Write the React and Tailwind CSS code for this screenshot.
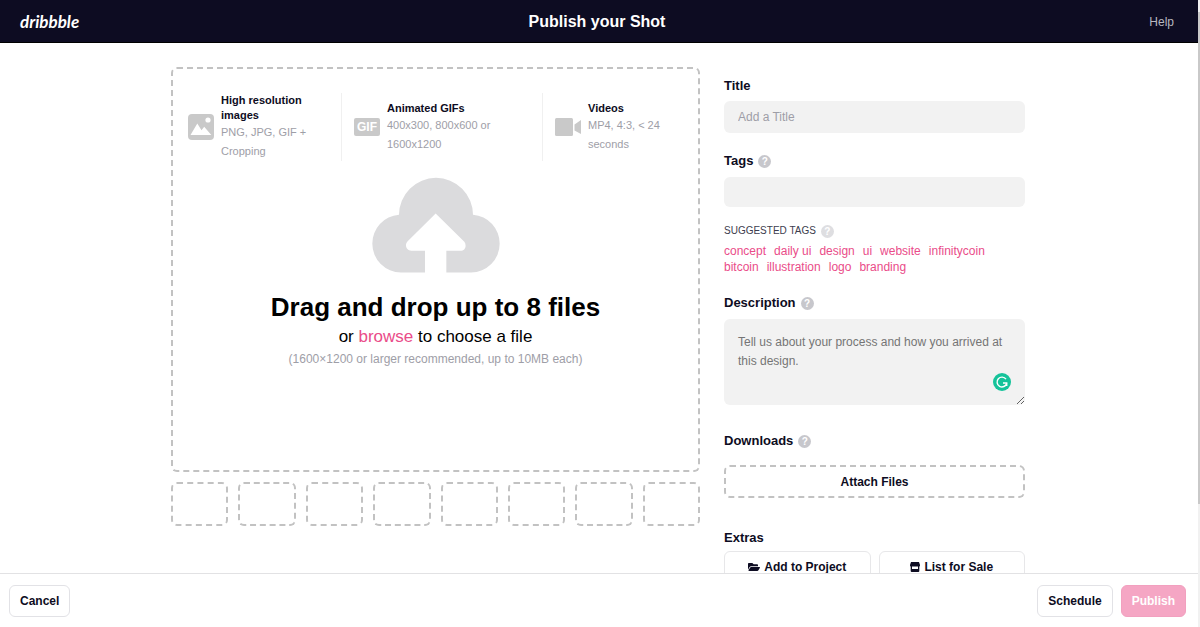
import { FaFolderOpen } from 'react-icons/fa';

const suggestedTags = [
  'concept', 'daily ui', 'design', 'ui', 'website',
  'infinitycoin', 'bitcoin', 'illustration', 'logo', 'branding',
];

function ImageIcon() {
  return (
    <svg className="w-[26px] h-[26px] shrink-0" viewBox="0 0 26 26" aria-hidden="true">
      <rect width="26" height="26" rx="4" fill="#c9c9c9" />
      <circle cx="20" cy="6" r="2.6" fill="#fff" />
      <path d="M2.5 21 L9.3 9.5 L13.5 16.2 L16.2 12.8 L23.3 21 Z" fill="#fff" />
    </svg>
  );
}

function VideoIcon() {
  return (
    <svg className="w-[26px] h-[18px] shrink-0" viewBox="0 0 26 18" aria-hidden="true">
      <rect width="18" height="18" rx="1.5" fill="#c9c9c9" />
      <path d="M19.5 6.5 L26 2 V16 L19.5 12.5 Z" fill="#c9c9c9" />
    </svg>
  );
}

function StoreIcon() {
  return (
    <svg className="w-[10px] h-[10px]" viewBox="0 0 10 10" fill="#0d0c22" aria-hidden="true">
      <path d="M1 0 H9 L10 3 V3.6 A1 1 0 0 1 9 4.6 H1 A1 1 0 0 1 0 3.6 V3 Z" />
      <path d="M0.7 4 H2 V7 H8 V4 H9.3 V9 A1 1 0 0 1 8.3 10 H1.7 A1 1 0 0 1 0.7 9 Z" />
    </svg>
  );
}

function CloudIcon() {
  return (
    <svg className="w-[128px] h-[96px]" viewBox="96 38 384 287" aria-hidden="true">
      <path
        d="M183 324 A86 86 0 0 1 97 238 A86 86 0 0 1 177 151 A111 111 0 0 1 399 151 A86 86 0 0 1 479 238 A86 86 0 0 1 393 324 H319 V259 H361 C376 259 381 243 373 232 L287 147 L203 230 C192 242 200 259 214 259 H255 V324 Z"
        fill="#dbdbdd"
      />
    </svg>
  );
}

function GrammarlyIcon() {
  return (
    <svg className="absolute right-[14px] bottom-[14px] w-[18px] h-[18px]" viewBox="0 0 18 18" aria-hidden="true">
      <circle cx="9" cy="9" r="9" fill="#15c39a" />
      <path d="M13 6.200 A4.900 4.900 0 1 0 13.700 10.300" fill="none" stroke="#fff" strokeWidth="1.400" />
      <path d="M10 10 H13.700 V13" fill="none" stroke="#fff" strokeWidth="1.400" />
    </svg>
  );
}

function HelpBadge({ light }) {
  return (
    <span
      className={`w-[13px] h-[13px] rounded-full text-white text-[10px] leading-[13px] font-bold text-center ${light ? 'bg-[#dedee1]' : 'bg-[#c7c7cc]'}`}
    >
      ?
    </span>
  );
}

function Format({ icon, title, children, className }) {
  return (
    <div className={`flex items-center gap-[7px] h-[68px] ${className}`}>
      {icon}
      <div className="text-[11px]">
        <h3 className="font-bold leading-[15px] text-[#0d0c22]">{title}</h3>
        <p className="leading-[19px] text-[#9e9ea7]">{children}</p>
      </div>
    </div>
  );
}

function Dropzone() {
  return (
    <section>
      <div className="h-[405px] border-2 border-dashed border-[#c2c2c2] rounded-md pt-6 px-[15px]">
        <div className="flex">
          <Format icon={<ImageIcon />} title="High resolution images" className="w-[153px] pr-8">
            PNG, JPG, GIF + Cropping
          </Format>
          <Format
            icon={
              <span className="w-[26px] h-[18px] shrink-0 rounded-xs bg-[#c9c9c9] text-white text-[12px] leading-[18px] font-bold text-center">
                GIF
              </span>
            }
            title="Animated GIFs"
            className="w-[201px] border-l border-[#f0f0f0] pl-3 pr-8"
          >
            400x300, 800x600 or 1600x1200
          </Format>
          <Format icon={<VideoIcon />} title="Videos" className="flex-1 border-l border-[#f0f0f0] pl-3 pr-4">
            MP4, 4:3, &lt; 24 seconds
          </Format>
        </div>

        <div className="flex flex-col items-center mt-4 text-center">
          <CloudIcon />
          <h2 className="mt-[18px] text-[26px] leading-[32px] font-bold text-black">Drag and drop up to 8 files</h2>
          <p className="mt-1 text-[17px] leading-[20px] text-black">
            or <a href="#browse" className="text-[#ea4c89]">browse</a> to choose a file
          </p>
          <p className="mt-1 text-[12px] leading-[16px] text-[#9e9ea7]">
            (1600×1200 or larger recommended, up to 10MB each)
          </p>
        </div>
      </div>

      {/* Thumbnails */}
      <div className="grid grid-cols-8 gap-[10px] mt-[10px]">
        {Array.from({ length: 8 }, (_, i) => (
          <div key={i} className="h-11 border-2 border-dashed border-[#c2c2c2] rounded-md"></div>
        ))}
      </div>
    </section>
  );
}

function ShotForm() {
  return (
    <form className="pt-[11px] text-[13px] text-[#0d0c22]">
      <label htmlFor="title" className="block leading-[16px] font-bold">Title</label>
      <input
        id="title"
        placeholder="Add a Title"
        className="block w-full h-8 mt-[7px] px-[14px] rounded-md bg-[#f2f2f2] text-[12px] placeholder:text-[#9e9ea7]"
      />

      <div className="flex items-center gap-[5px] mt-5 leading-[16px]">
        <label htmlFor="tags" className="font-bold">Tags</label>
        <HelpBadge />
      </div>
      <input id="tags" className="block w-full h-[30px] mt-2 px-[14px] rounded-md bg-[#f2f2f2] text-[12px]" />

      <div className="flex items-center gap-[5px] mt-4 leading-[16px]">
        <h3 className="text-[10px] uppercase text-[#3d3d4e]">Suggested tags</h3>
        <HelpBadge light />
      </div>
      <div className="flex flex-wrap gap-x-2 mt-1 pr-5 text-[12px] leading-[16px]">
        {suggestedTags.map(tag => (
          <a key={tag} href={`#${tag}`} className="text-[#ea4c89]">{tag}</a>
        ))}
      </div>

      <div className="flex items-center gap-[5px] mt-5 leading-[16px]">
        <label htmlFor="description" className="font-bold">Description</label>
        <HelpBadge />
      </div>
      <div className="relative mt-2">
        <textarea
          id="description"
          placeholder="Tell us about your process and how you arrived at this design."
          className="block w-full h-[86px] px-[14px] py-[14px] rounded-md bg-[#f2f2f2] text-[12px] leading-[19px] resize-y placeholder:text-[#757575]"
        />
        <GrammarlyIcon />
      </div>

      <div className="flex items-center gap-[5px] mt-7 leading-[16px]">
        <h3 className="font-bold">Downloads</h3>
        <HelpBadge />
      </div>
      <button
        type="button"
        className="w-full h-[33px] mt-4 border-2 border-dashed border-[#c2c2c2] rounded-md text-[12px] font-bold"
      >
        Attach Files
      </button>

      <h3 className="mt-8 leading-[16px] font-bold">Extras</h3>
      <div className="grid grid-cols-2 gap-2 mt-[5px] text-[12px] font-bold">
        <button type="button" className="flex items-center justify-center gap-1 h-8 border border-[#e7e7e9] rounded-md">
          <FaFolderOpen className="w-3 h-3" />
          Add to Project
        </button>
        <button type="button" className="flex items-center justify-center gap-1 h-8 border border-[#e7e7e9] rounded-md">
          <StoreIcon />
          List for Sale
        </button>
      </div>
    </form>
  );
}

export default function App() {
  return (
    <div className="flex h-screen bg-white font-['Liberation_Sans',Arial,sans-serif]">
      <div className="flex-1 min-w-0 flex flex-col">
        <header className="grid grid-cols-3 items-center h-[43px] pt-[2px] pl-5 pr-6 bg-[#0d0c22] border-b border-black">
          <a href="#home" className="justify-self-start text-white text-[17px] leading-[20px] italic font-bold font-['Lato',sans-serif]">
            dribbble
          </a>
          <h1 className="text-center text-white text-[16px] font-bold">Publish your Shot</h1>
          <a href="#help" className="justify-self-end text-[12px] text-[#b8b8c0]">Help</a>
        </header>

        <main className="flex-1 min-h-0 overflow-y-auto pr-[2px] [scrollbar-width:none]">
          <div className="grid grid-cols-[1fr_301px] gap-6 max-w-[854px] mx-auto pt-6 pb-10">
            <Dropzone />
            <ShotForm />
          </div>
        </main>

        <footer className="flex items-center gap-2 h-[54px] pl-[9px] pr-3 border-t border-[#e2e2e4] text-[12px] font-bold text-[#0d0c22]">
          <button className="h-8 px-[10px] border border-[#e2e2e6] rounded-md">Cancel</button>
          <button className="h-8 px-[10px] ml-auto border border-[#e2e2e6] rounded-md">Schedule</button>
          <button className="h-8 px-[10px] border border-[#f2a0bf] rounded-md bg-[#f5a6c4] text-white">Publish</button>
        </footer>
      </div>

      {/* Scroll track */}
      <div className="w-[2px] pt-3 bg-[#f1f1f1]">
        <div className="h-4/5 bg-[#c9c9c9]"></div>
      </div>
    </div>
  );
}
